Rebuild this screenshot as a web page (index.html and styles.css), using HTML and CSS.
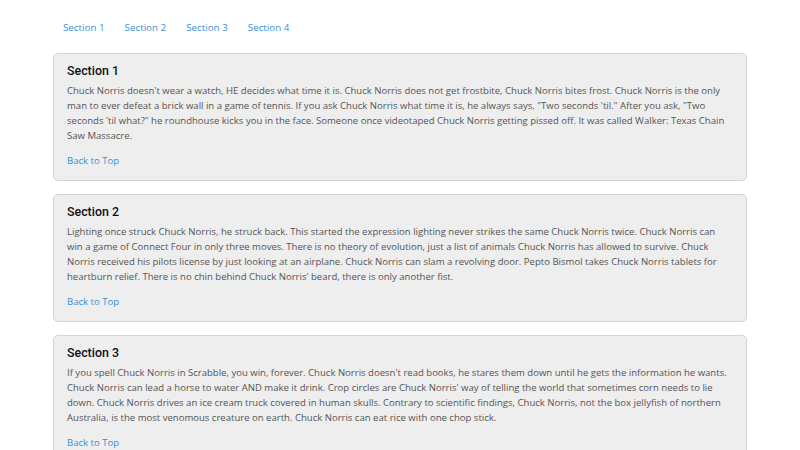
FILE: index.html
```html
<!DOCTYPE html>
<html lang="en">
<head>
    <meta charset="UTF-8">
    <meta name="viewport" content="width=device-width, initial-scale=1.0">
    <title>Sections</title>
    <link rel="stylesheet" href="styles.css">
</head>
<body>
    <div class="wrap" id="top">
        <nav class="nav">
            <a href="#section1">Section 1</a>
            <a href="#section2">Section 2</a>
            <a href="#section3">Section 3</a>
            <a href="#section4">Section 4</a>
        </nav>

        <div class="section" id="section1">
            <h3>Section 1</h3>
            <p>Chuck Norris doesn't wear a watch, HE decides what time it is. Chuck Norris does not get frostbite, Chuck Norris bites frost. Chuck Norris is the only man to ever defeat a brick wall in a game of tennis. If you ask Chuck Norris what time it is, he always says, "Two seconds 'til." After you ask, "Two seconds 'til what?" he roundhouse kicks you in the face. Someone once videotaped Chuck Norris getting pissed off. It was called Walker: Texas Chain Saw Massacre.</p>
            <a href="#top">Back to Top</a>
        </div>

        <div class="section" id="section2">
            <h3>Section 2</h3>
            <p>Lighting once struck Chuck Norris, he struck back. This started the expression lighting never strikes the same Chuck Norris twice. Chuck Norris can win a game of Connect Four in only three moves. There is no theory of evolution, just a list of animals Chuck Norris has allowed to survive. Chuck Norris received his pilots license by just looking at an airplane. Chuck Norris can slam a revolving door. Pepto Bismol takes Chuck Norris tablets for heartburn relief. There is no chin behind Chuck Norris' beard, there is only another fist.</p>
            <a href="#top">Back to Top</a>
        </div>

        <div class="section" id="section3">
            <h3>Section 3</h3>
            <p>If you spell Chuck Norris in Scrabble, you win, forever. Chuck Norris doesn't read books, he stares them down until he gets the information he wants. Chuck Norris can lead a horse to water AND make it drink. Crop circles are Chuck Norris' way of telling the world that sometimes corn needs to lie down. Chuck Norris drives an ice cream truck covered in human skulls. Contrary to scientific findings, Chuck Norris, not the box jellyfish of northern Australia, is the most venomous creature on earth. Chuck Norris can eat rice with one chop stick.</p>
            <a href="#top">Back to Top</a>
        </div>

        <div class="section" id="section4">
            <h3>Section 4</h3>
            <p>Chuck Norris counted to infinity. Twice.</p>
            <a href="#top">Back to Top</a>
        </div>
    </div>
</body>
</html>
```

FILE: styles.css
```css
body {
    margin: 0;
    font-family: "Open Sans", Arial, sans-serif;
    font-size: 9.55px;
    line-height: 15px;
    color: #555;
    background-color: #fff;
}
a {
    color: #3a8fd6;
    text-decoration: none;
}
.wrap {
    width: 694px;
    margin: 0 auto;
}
.nav {
    display: flex;
    font-size: 9.8px;
    padding: 20px 0 18px;
}
.nav a {
    padding: 0 10px;
}
.section {
    background-color: #eeeeee;
    border: 1px solid #d4d4d4;
    border-radius: 5px;
    padding: 8px 13px 13px;
    margin-bottom: 13px;
    height: 105px;
}
.section h3 {
    margin: 0;
    font-family: Roboto, Arial, sans-serif;
    font-weight: 500;
    font-size: 12.4px;
    line-height: 18px;
    color: #111;
}
.section p {
    margin: 3px 0 10px;
}
```
